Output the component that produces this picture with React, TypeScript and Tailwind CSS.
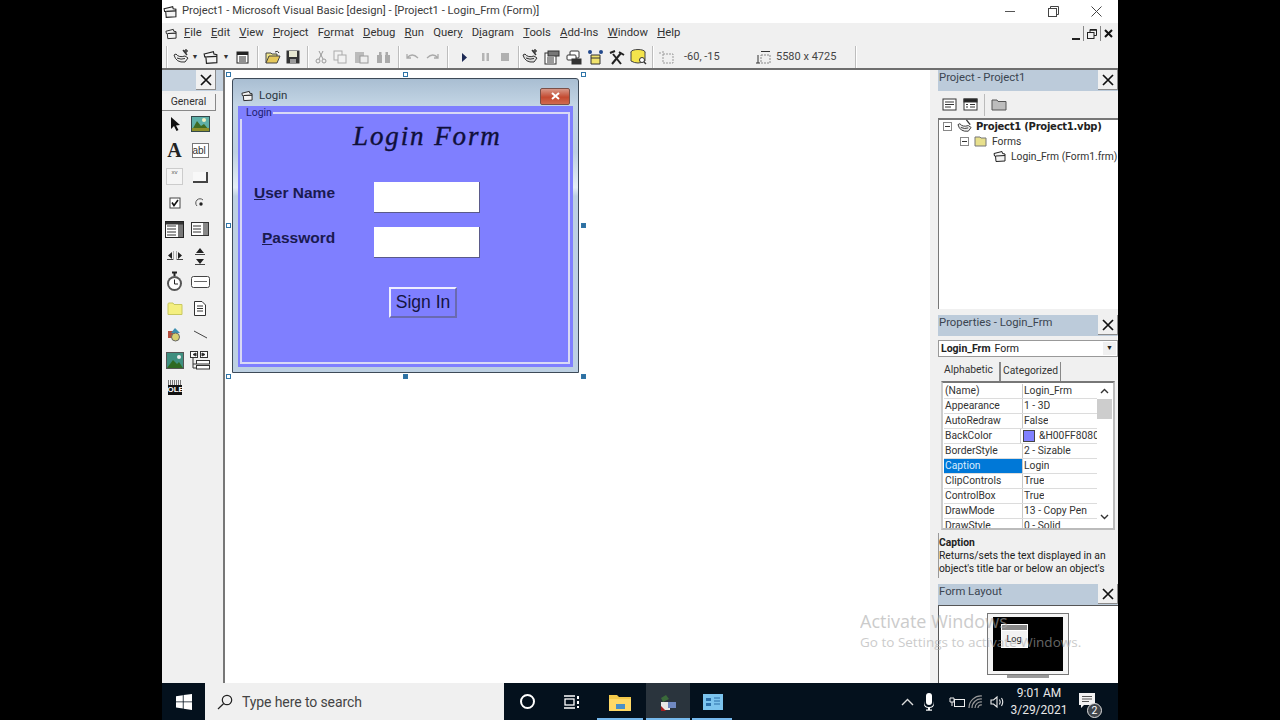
import React from "react";

const sans = "font-['Roboto','Open_Sans',sans-serif]";

function FormIcon({ size = 13, dark = "#222" }: { size?: number; dark?: string }) {
  return (
    <svg width={size} height={size} viewBox="0 0 13 13" fill="none" className="shrink-0">
      <path d="M1 3.5 L9 1.5 L9.5 3.5 L12 4 L12 11 L3 11.5 L2.5 6 L1.5 6 Z" fill="#f4f4f4" stroke={dark} strokeWidth="1" />
      <path d="M3 6 L12 5.5" stroke={dark} strokeWidth="1.2" />
    </svg>
  );
}

function Sep({ c = "mx-[4px]" }: { c?: string }) {
  return <div className={`w-[2px] h-[22px] border-l border-[#bdbdbd] bg-white shrink-0 ${c}`} />;
}

function TB({ children, c }: { children: React.ReactNode; c: string }) {
  return <div className={`h-[20px] flex items-center justify-center shrink-0 ${c}`}>{children}</div>;
}

function Menu({ t, u }: { t: string; u: number }) {
  return (
    <span className="text-[11.3px] text-[#333]">
      {t.slice(0, u)}
      <span className="underline">{t[u]}</span>
      {t.slice(u + 1)}
    </span>
  );
}

function PanelHeader({ title }: { title: string }) {
  return (
    <div className="flex items-start justify-between bg-[#bccbda] h-[21px] shrink-0">
      <span className="text-[11.3px] text-[#3a4450] pl-[1px] leading-[15px]">{title}</span>
      <CloseBox />
    </div>
  );
}

function CloseBox() {
  return (
    <div className="w-[20px] h-[20px] bg-[#f0f0f0] border-b border-r border-[#8b8b8b] flex items-center justify-center">
      <svg width="12" height="12" viewBox="0 0 12 12">
        <path d="M1 1 L11 11 M11 1 L1 11" stroke="#111" strokeWidth="1.7" />
      </svg>
    </div>
  );
}

function Handle({ c, filled }: { c: string; filled?: boolean }) {
  return <div className={`absolute w-[5px] h-[5px] border border-[#2f75a8] ${filled ? "bg-[#2f6f9f]" : "bg-white"} ${c}`} />;
}

const dish = (fill: string) => (
  <svg width="17" height="16" viewBox="0 0 17 16" fill="none" stroke="#333">
    <path d="M1 6 Q3 14 12 13 L15 9 L12 7 Q6 9 3 5 Z" fill={fill} />
    <path d="M4 9 Q8 11 12 9.5" />
    <path d="M10 1 L14 6" strokeWidth="1.4" />
    <circle cx="13" cy="2" r="1.3" fill="#777" />
  </svg>
);

const tools: React.ReactNode[] = [
  <svg width="14" height="16" viewBox="0 0 14 16"><path d="M3 1 L3 13 L6 10 L8.5 15 L10.5 14 L8 9.5 L12 9 Z" fill="#111" /></svg>,
  <svg width="19" height="16" viewBox="0 0 19 16"><rect x="0.5" y="0.5" width="18" height="15" fill="#5fb0a8" stroke="#34494a" /><path d="M1 14 L6 5 L10 10 L13 8 L18 14 Z" fill="#3f6b22" /><path d="M1 15 H18 V12 H1 Z" fill="#8d8f2b" /><circle cx="13" cy="4" r="2" fill="#f0f0c0" /></svg>,
  <span className="font-['Liberation_Serif',serif] text-[20px] leading-none font-bold text-[#222]">A</span>,
  <div className="w-[17px] h-[15px] border border-[#777] bg-white text-[10px] leading-[13px] text-[#333] font-['Liberation_Sans',sans-serif]">abl</div>,
  <div className="w-[17px] h-[17px] border border-[#ccc] bg-[#f5f5f5] text-[6px] leading-[6px] text-[#555] text-center font-['Liberation_Sans',sans-serif]">xv</div>,
  <div className="w-[15px] h-[11px] border-b-2 border-r-2 border-[#444] bg-[#f8f8f8] mt-[2px]" />,
  <svg width="12" height="12" viewBox="0 0 12 12"><rect x="1" y="1" width="10" height="10" fill="#fff" stroke="#444" /><path d="M3 5.5 L5 8.5 L9 3" stroke="#111" strokeWidth="1.6" fill="none" /></svg>,
  <svg width="11" height="11" viewBox="0 0 11 11"><path d="M2 8 A4 4 0 0 1 8 2" stroke="#555" fill="none" /><circle cx="6" cy="6" r="1.7" fill="#222" /></svg>,
  <svg width="19" height="17" viewBox="0 0 19 17"><rect x=".5" y=".5" width="18" height="16" fill="#fff" stroke="#222" /><path d="M2 5 H11 M2 8 H11 M2 11 H11 M2 14 H11" stroke="#333" /><rect x="13" y="1" width="5" height="15" fill="#777" /><rect x="1" y="1" width="17" height="2.5" fill="#333" /></svg>,
  <svg width="18" height="14" viewBox="0 0 18 14"><rect x=".5" y=".5" width="17" height="13" fill="#fff" stroke="#333" /><path d="M2 4 H10 M2 7 H10 M2 10 H10" stroke="#333" /><rect x="12" y="1" width="5" height="12" fill="#888" /></svg>,
  <svg width="16" height="9" viewBox="0 0 16 9"><path d="M5 1 L1 4.5 L5 8 Z M11 1 L15 4.5 L11 8 Z" fill="#222" /><path d="M6.5 0 V9 M9.5 0 V9" stroke="#aaa" /><path d="M0 8.5 H6 M10 8.5 H16" stroke="#444" /></svg>,
  <svg width="10" height="20" viewBox="0 0 10 20"><path d="M5 2 L1 7 H9 Z M5 18 L1 13 H9 Z" fill="#222" /><path d="M0 8.5 H10 M0 18.5 H10" stroke="#444" /></svg>,
  <svg width="19" height="21" viewBox="0 0 19 21"><path d="M7 1.5 H12 M9.5 2 V5" stroke="#222" strokeWidth="2" /><circle cx="9.5" cy="12.5" r="7.5" fill="#555" /><circle cx="9.5" cy="12.5" r="5.5" fill="#fff" /><path d="M9.5 8.5 V13 H13" stroke="#222" fill="none" /></svg>,
  <svg width="19" height="12" viewBox="0 0 19 12"><rect x=".5" y=".5" width="18" height="11" rx="2" fill="#fff" stroke="#444" /><path d="M3 5.5 H16" stroke="#666" /></svg>,
  <svg width="16" height="13" viewBox="0 0 16 13"><path d="M1 12.5 V2 Q1 1 2 1 H6 L7 2.5 H15 V12.5 Z" fill="#f4ef7f" stroke="#c8c860" /></svg>,
  <svg width="12" height="15" viewBox="0 0 12 15"><path d="M.5 .5 H8 L11.5 4 V14.5 H.5 Z" fill="#fff" stroke="#333" /><path d="M3 5 H9 M3 7.5 H9 M3 10 H9" stroke="#333" /></svg>,
  <svg width="15" height="15" viewBox="0 0 15 15"><rect x="1" y="4" width="7" height="7" fill="#b44f3e" /><path d="M8 1 L13 6 H4 Z" fill="#3d8fb0" /><circle cx="8.5" cy="10" r="4" fill="#d8d070" stroke="#666" /></svg>,
  <svg width="15" height="9" viewBox="0 0 15 9"><path d="M1 1 L14 8" stroke="#444" /></svg>,
  <svg width="18" height="17" viewBox="0 0 18 17"><rect x=".5" y=".5" width="17" height="16" fill="#3f8f80" stroke="#555" /><path d="M1 16 L7 8 L11 12 L13 10 L17 16 Z" fill="#2f6a22" /><circle cx="13" cy="5" r="2" fill="#eee" /></svg>,
  <svg width="20" height="19" viewBox="0 0 20 19" fill="#fff" stroke="#333"><rect x=".5" y=".5" width="7" height="6" /><rect x="10.5" y=".5" width="7" height="6" /><path d="M6 2 L3 3.5 L6 5 Z M12 2 L15 3.5 L12 5 Z" fill="#222" /><path d="M3 7 V13 H6 M3 13 V17 H6" fill="none" /><rect x="6.5" y="9.5" width="13" height="3.5" /><rect x="6.5" y="14.5" width="13" height="3.5" /></svg>,
  <div className="flex flex-col items-center">
    <div className="w-[14px] h-[5px] bg-[repeating-linear-gradient(90deg,#777_0_1px,transparent_1px_2px)]" />
    <div className="w-[14px] h-[10px] bg-[#111] text-white text-[8px] leading-[10px] font-bold text-center font-['Liberation_Sans',sans-serif]">OLE</div>
  </div>,
];

const props: [string, string][] = [
  ["(Name)", "Login_Frm"],
  ["Appearance", "1 - 3D"],
  ["AutoRedraw", "False"],
  ["BackColor", "&H00FF8080"],
  ["BorderStyle", "2 - Sizable"],
  ["Caption", "Login"],
  ["ClipControls", "True"],
  ["ControlBox", "True"],
  ["DrawMode", "13 - Copy Pen"],
  ["DrawStyle", "0 - Solid"],
];

function TitleBar() {
  return (
    <div className="h-[23px] bg-white flex items-center shrink-0">
      <div className="w-[15px] flex justify-center"><FormIcon size={14} /></div>
      <span className="text-[11.2px] text-[#3c3c3c] ml-[5px]">Project1 - Microsoft Visual Basic [design] - [Project1 - Login_Frm (Form)]</span>
      <div className="ml-auto flex items-center h-full">
        <div className="w-[44px] flex justify-center"><div className="w-[10px] h-px bg-[#555]" /></div>
        <div className="w-[42px] flex justify-center">
          <svg width="11" height="11" viewBox="0 0 11 11" fill="none" stroke="#444"><rect x=".5" y="2.5" width="8" height="8" /><path d="M2.5 2.5 V.5 H10.5 V8.5 H8.5" /></svg>
        </div>
        <div className="w-[44px] flex justify-center">
          <svg width="11" height="11" viewBox="0 0 11 11" stroke="#444"><path d="M.5 .5 L10.5 10.5 M10.5 .5 L.5 10.5" /></svg>
        </div>
      </div>
    </div>
  );
}

function MenuBar() {
  const items: [string, number][] = [["File", 0], ["Edit", 0], ["View", 0], ["Project", 0], ["Format", 1], ["Debug", 0], ["Run", 0], ["Query", 4], ["Diagram", 1], ["Tools", 0], ["Add-Ins", 0], ["Window", 0], ["Help", 0]];
  return (
    <div className="h-[21px] bg-[#f0f0f0] flex items-center shrink-0 pl-[3px]">
      <FormIcon size={12} />
      <div className="flex gap-[9.2px] ml-[7px]">
        {items.map(([t, u]) => <Menu key={t} t={t} u={u} />)}
      </div>
      <div className="ml-auto flex items-center pr-[2px]">
        <div className="w-[16px] h-[15px] border-r border-[#888] flex items-end justify-center pb-[1px]"><div className="w-[8px] h-[2px] bg-[#222]" /></div>
        <div className="w-[17px] h-[15px] border-r border-[#888] flex items-center justify-center">
          <svg width="10" height="10" viewBox="0 0 10 10" fill="none" stroke="#222"><rect x=".5" y="3.5" width="6.5" height="6" /><path d="M3 3 V.5 H9.5 V6.5 H7" /><path d="M3 1 H9.5" strokeWidth="1.5" /></svg>
        </div>
        <div className="w-[15px] h-[15px] flex items-center justify-center">
          <svg width="9" height="9" viewBox="0 0 9 9" stroke="#111" strokeWidth="2"><path d="M1 1 L8 8 M8 1 L1 8" /></svg>
        </div>
      </div>
    </div>
  );
}

function Toolbar() {
  return (
    <div className="h-[26px] bg-[#f0f0f0] border-b-2 border-[#6e6e6e] flex items-center shrink-0 pt-[2px]">
      <Sep />
      <TB c="w-[18px]">{dish("#eee")}</TB>
      <span className="text-[7px] text-[#333] w-[10px] text-center">▼</span>
      <TB c="w-[20px]"><FormIcon size={15} /></TB>
      <span className="text-[7px] text-[#333] w-[12px] text-center">▼</span>
      <TB c="w-[21px]">
        <svg width="13" height="13" viewBox="0 0 13 13"><rect x="1" y="1" width="11" height="11" fill="#fff" stroke="#222" /><rect x="1" y="1" width="11" height="3" fill="#222" /><path d="M3 6 H10 M3 8 H10 M3 10 H10" stroke="#222" /></svg>
      </TB>
      <Sep />
      <TB c="w-[20px]">
        <svg width="16" height="14" viewBox="0 0 16 14"><path d="M1 13 V3 H6 L7 4 H12 V6" fill="#f0e68c" stroke="#444" /><path d="M1 13 L4 6 H15 L12 13 Z" fill="#e6c85a" stroke="#444" /><path d="M10 2 Q13 0 14 3" stroke="#333" fill="none" /></svg>
      </TB>
      <TB c="w-[20px]">
        <svg width="14" height="14" viewBox="0 0 14 14"><rect x=".5" y=".5" width="13" height="13" fill="#333" /><rect x="3" y="1" width="8" height="6" fill="#e6e6d0" /><rect x="4" y="9" width="6" height="4" fill="#999" /></svg>
      </TB>
      <Sep />
      <TB c="w-[16px]">
        <svg width="12" height="14" viewBox="0 0 12 14" fill="none" stroke="#999"><circle cx="3" cy="11" r="2" /><circle cx="9" cy="11" r="2" /><path d="M4 9 L8 1 M8 9 L4 1" /></svg>
      </TB>
      <TB c="w-[22px]">
        <svg width="14" height="14" viewBox="0 0 14 14" fill="#f2f2f2" stroke="#aaa"><rect x="1" y="1" width="8" height="9" /><rect x="5" y="5" width="8" height="8" /></svg>
      </TB>
      <TB c="w-[21px]">
        <svg width="15" height="14" viewBox="0 0 15 14"><rect x="1" y="2" width="9" height="11" fill="#bbb" /><rect x="6" y="6" width="8" height="7" fill="#eee" stroke="#999" /></svg>
      </TB>
      <TB c="w-[22px]">
        <svg width="15" height="13" viewBox="0 0 15 13" fill="#aaa"><rect x="1" y="4" width="5" height="8" /><rect x="9" y="4" width="5" height="8" /><rect x="3" y="1" width="2.5" height="4" /><rect x="9.5" y="1" width="2.5" height="4" /></svg>
      </TB>
      <Sep />
      <TB c="w-[17px]">
        <svg width="13" height="9" viewBox="0 0 13 9" fill="none" stroke="#aaa" strokeWidth="1.3"><path d="M1 5 Q6 -1 12 5 M1 1 V5 H5" /></svg>
      </TB>
      <TB c="w-[22px]">
        <svg width="13" height="9" viewBox="0 0 13 9" fill="none" stroke="#aaa" strokeWidth="1.3"><path d="M12 5 Q7 -1 1 5 M12 1 V5 H8" /></svg>
      </TB>
      <Sep />
      <TB c="w-[22px]">
        <svg width="7" height="9" viewBox="0 0 7 9"><path d="M1 0 L6 4.5 L1 9 Z" fill="#1d2a55" /></svg>
      </TB>
      <TB c="w-[21px]">
        <svg width="7" height="8" viewBox="0 0 7 8" fill="#b4b4b4"><rect width="2.5" height="8" /><rect x="4.5" width="2.5" height="8" /></svg>
      </TB>
      <TB c="w-[18px]"><div className="w-[8px] h-[8px] bg-[#b0b0b0]" /></TB>
      <Sep c="ml-[4px]" />
      <TB c="w-[21.5px]">{dish("#ddd")}</TB>
      <TB c="w-[21.5px]">
        <svg width="16" height="15" viewBox="0 0 16 15" fill="#fff" stroke="#333"><rect x="1" y="3" width="11" height="11" /><rect x="4" y="1" width="11" height="5" fill="#777" /><path d="M3 8 H10 M3 10 H10 M3 12 H10" /></svg>
      </TB>
      <TB c="w-[21.5px]">
        <svg width="16" height="15" viewBox="0 0 16 15" fill="#fff" stroke="#333"><rect x="4" y="1" width="9" height="7" rx="1" /><rect x="1" y="5" width="9" height="5" rx="1" /><rect x="6" y="9" width="9" height="5" fill="#333" /></svg>
      </TB>
      <TB c="w-[21.5px]">
        <svg width="17" height="16" viewBox="0 0 17 16"><circle cx="3" cy="3" r="2" fill="#22488c" /><circle cx="14" cy="3" r="2" fill="#22488c" /><path d="M4 6 H13 V15 H4 Z" fill="#f1e36c" stroke="#333" /><path d="M4 9 H13" stroke="#333" /></svg>
      </TB>
      <TB c="w-[21.5px]">
        <svg width="16" height="15" viewBox="0 0 16 15" fill="none" stroke="#222" strokeWidth="2"><path d="M3 14 L12 3 M12 14 L4 4" /><path d="M1 3 L6 1 M10 2 L15 5" /></svg>
      </TB>
      <TB c="w-[21.5px]">
        <svg width="17" height="16" viewBox="0 0 17 16"><ellipse cx="8" cy="3" rx="7" ry="2.5" fill="#f4e44c" stroke="#444" /><path d="M1 3 V12 Q8 16 15 12 V3" fill="#f4e44c" stroke="#444" /><circle cx="12" cy="11" r="2.5" fill="#fff" stroke="#333" /><path d="M14 13 L16 15" stroke="#333" strokeWidth="1.5" /></svg>
      </TB>
      <Sep c="ml-[3px]" />
      <TB c="w-[24px]">
        <svg width="16" height="14" viewBox="0 0 16 14" fill="none" stroke="#999"><path d="M5 3 V.5 M3 3 H.5 M5 4 H15 V13 H5 Z" strokeDasharray="2 1" /></svg>
      </TB>
      <span className="text-[11px] text-[#444] ml-[6px] w-[68px]">-60, -15</span>
      <TB c="w-[22px]">
        <svg width="16" height="14" viewBox="0 0 16 14" fill="none" stroke="#333"><path d="M6 1.5 H15 M3 5 V13 M1 13 H5" /><path d="M6 5 H15 V13 H6 Z" strokeDasharray="2 1" stroke="#888" /></svg>
      </TB>
      <span className="text-[11px] text-[#444] ml-[2px] w-[79px]">5580 x 4725</span>
      <Sep c="ml-0" />
    </div>
  );
}

function Toolbox() {
  return (
    <div className="w-[61px] shrink-0 bg-[#f0f0f0] flex flex-col">
      <div className="h-[21px] bg-[#c5d2df] flex justify-end pr-[7px]"><CloseBox /></div>
      <div className="mt-[3px] h-[17px] w-[54px] bg-[#f2f2f2] border-b border-r border-[#888] text-[10.5px] leading-[15px] text-center text-[#333]">General</div>
      <div className="grid grid-cols-[25px_26px] auto-rows-[26.3px]">
        {tools.map((t, i) => (
          <div key={i} className="flex items-center justify-center">{t}</div>
        ))}
      </div>
    </div>
  );
}

function DesignForm() {
  return (
    <div className="w-[347px] h-[295px] mt-[8px] ml-[7px] rounded-t-[3px] border border-[#3d4a58] bg-[linear-gradient(180deg,#a9bed2_0%,#c3d5e5_9%,#bdd0e2_25%,#e4edf5_37%,#bdd0e2_40%,#bdd0e2_100%)] flex flex-col px-[5px] pb-[5px]">
      <div className="h-[27px] flex items-center shrink-0 pl-[3px] pr-[3px] pt-[7px]">
        <FormIcon size={12} />
        <span className="ml-[6px] text-[11.5px] text-[#2c3640]">Login</span>
        <div className="ml-auto w-[30px] h-[17px] rounded-[2px] bg-[linear-gradient(180deg,#d89888,#c44a30_55%,#d06a50)] border border-[#7a5048] flex items-center justify-center">
          <svg width="9" height="8" viewBox="0 0 9 8"><path d="M1 1 L8 7 M8 1 L1 7" stroke="#fff" strokeWidth="2" /></svg>
        </div>
      </div>
      <div className="flex-1 bg-[#7f7fff] pt-[6px] pb-[3px] pl-[2px] pr-[3px] flex">
        <div className="flex-1 relative border-2 border-[#d9d9f5]">
          <span className="absolute -top-[8px] -left-[2px] bg-[#7f7fff] pl-[6px] pr-[1px] text-[10.5px] leading-[13px] text-[#1d1d70]">Login</span>
          <div className="h-full flex flex-col text-[#14143f] font-['Liberation_Sans',sans-serif] pl-[1px]">
            <div className="pl-[110px] pt-[4px] h-[45px] font-['Liberation_Serif',serif] italic text-[27px] tracking-[1.9px] leading-[36px] text-[#10103a] whitespace-nowrap [-webkit-text-stroke:0.4px_#10103a]">Login Form</div>
            <div className="flex mt-[23px] items-start">
              <div className="w-[131px] pl-[11px] text-[15.5px] leading-[20px] font-bold pt-[1px] text-[#1a1a50]"><span className="underline">U</span>ser Name</div>
              <div className="w-[106px] h-[31px] bg-white border-b border-r border-[#5a5a8a]" />
            </div>
            <div className="flex mt-[14px] items-start">
              <div className="w-[131px] pl-[19px] text-[15.5px] leading-[20px] font-bold pt-[1px] text-[#1a1a50]"><span className="underline">P</span>assword</div>
              <div className="w-[106px] h-[31px] bg-white border-b border-r border-[#5a5a8a]" />
            </div>
            <div className="ml-[146px] mt-[29px] w-[68px] h-[31px] border-2 border-t-[#eeeeff] border-l-[#eeeeff] border-r-[#6a6ab0] border-b-[#6a6ab0] flex items-center justify-center text-[17.5px] text-[#14143f]">Sign In</div>
          </div>
        </div>
      </div>
    </div>
  );
}

function Canvas() {
  return (
    <div className="flex-1 bg-white border-l-2 border-[#777] relative">
      <DesignForm />
      <Handle c="left-[1px] top-[2px]" />
      <Handle c="left-[178px] top-[2px]" />
      <Handle c="left-[356px] top-[2px]" />
      <Handle c="left-[1px] top-[153px]" />
      <Handle c="left-[356px] top-[153px]" filled />
      <Handle c="left-[1px] top-[304px]" />
      <Handle c="left-[178px] top-[304px]" filled />
      <Handle c="left-[356px] top-[304px]" filled />
    </div>
  );
}

function PropsGrid() {
  return (
    <div className="h-[149px] border-2 border-t-[#777] border-l-[#ccc] border-r-[#bbb] border-b-[#bbb] bg-white flex overflow-hidden ml-[3px] mr-[3px] pl-[1px] shrink-0">
      <div className="w-[153px] shrink-0 pt-[1px]">
        {props.map(([k, v], i) => (
          <div key={k} className="h-[15px] flex border-b border-[#dcdcdc] text-[10.3px] leading-[14px] text-[#333]">
            <div className={`w-[79px] border-r border-[#c8c8c8] pl-[1px] ${k === "Caption" ? "bg-[#0078d7] text-[#d8ecff]" : ""}`}>{k}</div>
            <div className="pl-[1px] flex items-center overflow-hidden whitespace-nowrap">
              {i === 3 && <span className="w-[12px] h-[12px] bg-[#8080ff] border border-[#444] ml-[1px] mr-[3px] shrink-0" />}
              <span className={i === 3 ? "ml-[1px]" : ""}>{v}</span>
            </div>
          </div>
        ))}
      </div>
      <div className="w-[15px] flex flex-col items-center">
        <span className="h-[16px] flex items-center">
          <svg width="9" height="6" viewBox="0 0 9 6" fill="none" stroke="#333" strokeWidth="1.4"><path d="M1 5 L4.5 1.5 L8 5" /></svg>
        </span>
        <div className="w-[15px] h-[20px] bg-[#cdcdcd]" />
        <div className="flex-1" />
        <span className="h-[22px] flex items-center">
          <svg width="9" height="6" viewBox="0 0 9 6" fill="none" stroke="#333" strokeWidth="1.4"><path d="M1 1 L4.5 4.5 L8 1" /></svg>
        </span>
      </div>
    </div>
  );
}

function RightPanel() {
  return (
    <div className="w-[188px] shrink-0 bg-[#f0f0f0] pl-[8px] flex flex-col">
      <PanelHeader title="Project - Project1" />
      <div className="h-[27px] flex items-center pl-[4px] gap-[6px] shrink-0">
        <svg width="15" height="13" viewBox="0 0 15 13" fill="#fff" stroke="#333"><rect x="1" y="1" width="13" height="11" /><path d="M3 4 H12 M3 6.5 H12 M3 9 H9" /></svg>
        <svg width="15" height="13" viewBox="0 0 15 13" fill="#fff" stroke="#333"><rect x="1" y="1" width="13" height="11" /><rect x="1" y="1" width="13" height="3" fill="#222" /><path d="M3 6.5 H5 M7 6.5 H12 M3 9 H5 M7 9 H12" /></svg>
        <div className="w-px h-[22px] bg-[#bbb]" />
        <svg width="16" height="13" viewBox="0 0 16 13" fill="#bdbdbd" stroke="#555"><path d="M1 12 V2 H6 L7 3.5 H15 V12 Z" /></svg>
      </div>
      <div className="h-[191px] border-t-2 border-l border-[#777] bg-white pl-[4px] shrink-0 text-[10.3px] text-[#333]">
        <div className="h-[15px] -mt-[1px] flex items-center whitespace-nowrap">
          <Plus />
          <svg width="16" height="15" viewBox="0 0 17 16" fill="none" stroke="#333" className="ml-[5px] shrink-0"><path d="M1 6 Q3 14 12 13 L15 9 L12 7 Q6 9 3 5 Z" fill="#eee" /><path d="M4 9 Q8 11 12 9.5" /><path d="M10 1 L14 6" strokeWidth="1.4" /></svg>
          <span className="ml-[3px] font-['DejaVu_Sans',sans-serif] font-bold text-[10px] tracking-[-0.25px] text-[#222]">Project1 (Project1.vbp)</span>
        </div>
        <div className="h-[15px] flex items-center pl-[17px] whitespace-nowrap">
          <Plus />
          <svg width="15" height="11" viewBox="0 0 15 11" className="ml-[5px] shrink-0"><path d="M1 10 V1 H6 L7 2 H12 V10 Z" fill="#e8e08c" stroke="#777" /></svg>
          <span className="ml-[3px]">Forms</span>
        </div>
        <div className="h-[15px] flex items-center pl-[50px] whitespace-nowrap">
          <FormIcon size={13} />
          <span className="ml-[5px]">Login_Frm (Form1.frm)</span>
        </div>
      </div>
      <div className="h-[6px] shrink-0" />
      <PanelHeader title="Properties - Login_Frm" />
      <div className="mt-[4px] h-[17px] border border-[#999] bg-white flex items-center pl-[2px] text-[10.5px] text-[#222] shrink-0 relative">
        <span className="font-bold">Login_Frm</span><span className="ml-[4px]">Form</span>
        <div className="absolute right-[1px] top-[1px] w-[13px] h-[13px] bg-[#f0f0f0] text-[7px] leading-[12px] text-center">▼</div>
      </div>
      <div className="h-[24px] flex items-end pl-[6px] text-[10.3px] text-[#333] shrink-0">
        <span className="h-[20px] w-[55px] leading-[18px]">Alphabetic</span>
        <span className="h-[19px] border-l-2 border-r border-[#888] px-[2px] leading-[18px]">Categorized</span>
      </div>
      <PropsGrid />
      <div className="mt-[3px] h-[45px] border-l border-[#999] text-[10.3px] leading-[13px] text-[#222] shrink-0 pt-[3px] overflow-hidden">
        <div className="font-bold">Caption</div>
        <div className="whitespace-nowrap">Returns/sets the text displayed in an</div>
        <div className="whitespace-nowrap">object's title bar or below an object's</div>
      </div>
      <div className="h-[6px] shrink-0" />
      <PanelHeader title="Form Layout" />
      <div className="flex-1 border-l border-t border-[#555] bg-white flex justify-center pt-[7px] pr-[2px]">
        <div className="flex flex-col items-center">
          <div className="w-[82px] h-[62px] bg-[#f5f5f5] border border-[#777] px-[5px] py-[3px]">
            <div className="h-full bg-black pt-[7px] pl-[8px]">
              <div className="w-[27px] h-[24px] border border-white bg-[#f2f2f2]">
                <div className="h-[6px] bg-[#888] border-b border-white" />
                <div className="text-[9px] leading-[10px] mt-[3px] text-[#222] overflow-hidden whitespace-nowrap text-center">Log</div>
              </div>
            </div>
          </div>
          <div className="w-[42px] h-[3px] bg-[#999]" />
        </div>
      </div>
    </div>
  );
}

function Plus() {
  return (
    <div className="w-[9px] h-[9px] border border-[#888] bg-white flex items-center justify-center shrink-0">
      <div className="w-[5px] h-px bg-[#333]" />
    </div>
  );
}

function Taskbar() {
  return (
    <div className="h-[37px] bg-[#04111d] flex items-stretch shrink-0 text-white">
      <div className="w-[43px] flex items-center justify-center">
        <svg width="16" height="16" viewBox="0 0 16 16" fill="#fff"><path d="M0 2.2 L6.8 1.2 V7.4 H0 Z M7.6 1.1 L16 0 V7.4 H7.6 Z M0 8.2 H6.8 V14.5 L0 13.6 Z M7.6 8.2 H16 V16 L7.6 14.8 Z" /></svg>
      </div>
      <div className="w-[299px] bg-[#f0f0f0] flex items-center pl-[12px] text-[#444]">
        <svg width="16" height="16" viewBox="0 0 16 16" fill="none" stroke="#222" strokeWidth="1.2"><circle cx="10" cy="6" r="4.7" /><path d="M6.7 9.5 L1 15" /></svg>
        <span className="ml-[9px] text-[14px] pt-[1px] tracking-[-0.1px]">Type here to search</span>
      </div>
      <div className="w-[46px] flex items-center justify-center">
        <div className="w-[15px] h-[15px] rounded-full border-[2.5px] border-white" />
      </div>
      <div className="w-[44px] flex items-center justify-center">
        <svg width="16" height="14" viewBox="0 0 16 14" fill="none" stroke="#fff" strokeWidth="1.3"><path d="M0 1 H11 M0 13 H11" /><rect x="1" y="4" width="9" height="6" /><path d="M14 1 V4 M14 6 V9 M14 11 V13" strokeWidth="2" /></svg>
      </div>
      <div className="w-[52px] flex items-center justify-center relative">
        <svg width="22" height="18" viewBox="0 0 22 18"><path d="M0 2 H8 L10 4 H22 V18 H0 Z" fill="#f3c94a" /><rect x="0" y="6" width="22" height="12" fill="#ffd966" /><rect x="7" y="11" width="9" height="5" fill="#4a90c8" /></svg>
        <div className="absolute bottom-0 left-[3px] right-[3px] h-[2px] bg-[#76b9ed]" />
      </div>
      <div className="w-[44px] bg-[#2a343d] flex items-center justify-center relative">
        <svg width="22" height="22" viewBox="0 0 22 22"><path d="M4 7 L9 4 L12 8 L6 11 Z" fill="#3a6a3a" /><rect x="4" y="11" width="9" height="8" fill="#e8e8e8" /><path d="M11 11 H19 V17 H11 Z" fill="#6f88c0" /><path d="M4 15 L9 20 H4 Z" fill="#a42020" /></svg>
        <div className="absolute bottom-0 left-0 right-0 h-[2px] bg-[#76b9ed]" />
      </div>
      <div className="w-[46px] flex items-center justify-center relative">
        <svg width="20" height="16" viewBox="0 0 20 16"><rect width="20" height="16" fill="#7cc4ee" /><rect x="3" y="4" width="5" height="3" fill="#2a6ea8" /><rect x="3" y="9" width="5" height="3" fill="#2a6ea8" /><path d="M11 4 H17 M11 7 H17 M11 10 H17" stroke="#2a6ea8" /></svg>
        <div className="absolute bottom-0 left-[2px] right-[4px] h-[2px] bg-[#76b9ed]" />
      </div>
      <div className="flex-1" />
      <div className="flex items-center pr-[7px]">
        <svg width="13" height="8" viewBox="0 0 13 8" fill="none" stroke="#ddd" strokeWidth="1.4"><path d="M1 7 L6.5 1.5 L12 7" /></svg>
        <svg width="12" height="18" viewBox="0 0 12 18" fill="#fff" className="ml-[9px]"><rect x="3" y="0" width="6" height="12" rx="3" /><path d="M1 8 Q1 14 6 14 Q11 14 11 8 V11 Q11 15 6 15 Q1 15 1 11 Z" /><rect x="5" y="15" width="2" height="2" /><rect x="3" y="16.5" width="6" height="1.2" /></svg>
        <svg width="16" height="12" viewBox="0 0 16 12" fill="none" stroke="#eee" className="ml-[14px]"><path d="M1 2 H5 V6 H1 Z M3 6 V10" /><rect x="5.5" y="3.5" width="10" height="7" /></svg>
        <svg width="16" height="14" viewBox="0 0 16 14" fill="none" stroke="#999" strokeWidth="1.2" className="ml-[3px]"><path d="M1 13 A12 12 0 0 1 14 1 M4 13 A9 9 0 0 1 14 4 M7 13 A6 6 0 0 1 14 7 M10 13 A3 3 0 0 1 14 10" /></svg>
        <svg width="16" height="14" viewBox="0 0 16 14" fill="none" stroke="#eee" strokeWidth="1.1" className="ml-[6px]"><path d="M1 5 H3.5 L7 2 V12 L3.5 9 H1 Z M9.5 4.5 Q11 7 9.5 9.5 M11.5 3 Q14 7 11.5 11" /></svg>
      </div>
      <div className="w-[52px] flex flex-col items-center justify-center text-[12px] leading-[16.5px] text-[#e8e8e8]">
        <span>9:01 AM</span>
        <span>3/29/2021</span>
      </div>
      <div className="w-[53px] relative flex items-center justify-center">
        <svg width="16" height="16" viewBox="0 0 16 16" className="-ml-[9px] -mt-[1px]"><path d="M0 0 H16 V12 H5 L2 15 V12 H0 Z" fill="#f2f2f2" /><path d="M3 3.5 H13 M3 6 H13 M3 8.5 H10" stroke="#555" /></svg>
        <div className="absolute left-[22px] top-[20px] w-[15px] h-[15px] rounded-full bg-[#40464c] border border-[#ddd] text-[10.5px] leading-[13px] text-center text-white">2</div>
      </div>
    </div>
  );
}

export default function App() {
  return (
    <div className={`w-[1280px] h-[720px] bg-black overflow-hidden pl-[162px] pr-[162px] relative ${sans}`}>
      <div className="w-[956px] h-full flex flex-col">
        <TitleBar />
        <MenuBar />
        <Toolbar />
        <div className="flex-1 flex min-h-0">
          <Toolbox />
          <Canvas />
          <RightPanel />
        </div>
        <Taskbar />
      </div>
      <div className="absolute left-[860px] top-[610px] opacity-60 pointer-events-none whitespace-nowrap font-['Open_Sans',sans-serif]">
        <div className="text-[18px] leading-[22px] text-[#aaaaaa]">Activate Windows</div>
        <div className="text-[13.5px] leading-[20px] text-[#aaaaaa]">Go to Settings to activate Windows.</div>
      </div>
    </div>
  );
}
